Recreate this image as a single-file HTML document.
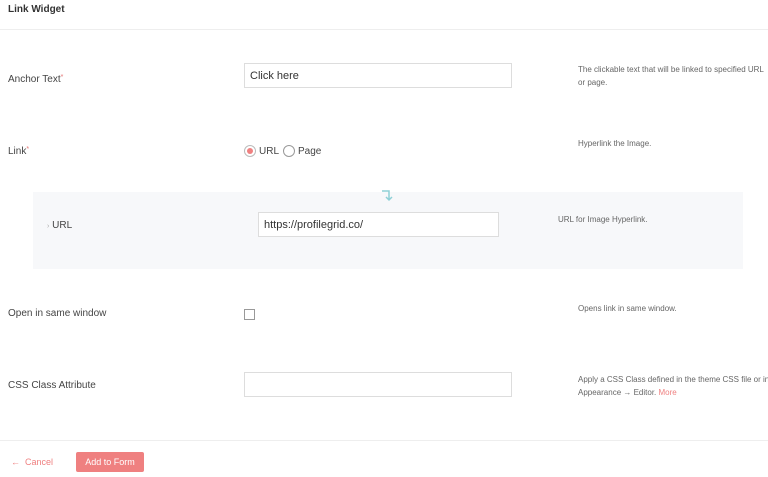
<!DOCTYPE html>
<html><head><style>
*{box-sizing:border-box;margin:0;padding:0}
body{width:768px;height:477px;background:#fff;font-family:"Liberation Sans",sans-serif;color:#444;position:relative;overflow:hidden}
.a{position:absolute;white-space:nowrap}
.lbl{font-size:10px;color:#444}
.help{font-size:8px;color:#666;line-height:13px}
.inp{position:absolute;border:1px solid #ddd;background:#fff;font-size:11px;color:#333;padding:6px 5px;height:25px}
.star{color:#e57373;font-size:7px;vertical-align:top}
</style></head><body>
<div class="a" style="left:8px;top:4px;font-size:10px;font-weight:bold;color:#333">Link Widget</div>
<div class="a" style="left:0;top:29px;width:768px;border-top:1px solid #eee"></div>

<div class="a lbl" style="left:8px;top:74px">Anchor Text<span class="star">*</span></div>
<div class="inp" style="left:244px;top:63px;width:268px">Click here</div>
<div class="a help" style="left:578px;top:63px">The clickable text that will be linked to specified URL<br>or page.</div>

<div class="a lbl" style="left:8px;top:146px">Link<span class="star">*</span></div>
<div class="a" style="left:244px;top:145px;width:12px;height:12px;border:1px solid #bbb;border-radius:50%;background:#fff"><div style="margin:2px;width:6px;height:6px;border-radius:50%;background:#ef8080"></div></div>
<div class="a lbl" style="left:259px;top:146px">URL</div>
<div class="a" style="left:283px;top:145px;width:12px;height:12px;border:1px solid #999;border-radius:50%"></div>
<div class="a lbl" style="left:298px;top:146px">Page</div>
<div class="a help" style="left:578px;top:137px">Hyperlink the Image.</div>

<div class="a" style="left:33px;top:192px;width:710px;height:77px;background:#f7f8fa"></div>
<svg class="a" style="left:381px;top:189px" width="14" height="14" viewBox="0 0 14 14"><path d="M1 2H8V11M5 8L8 11L11 8" stroke="#8fd0d6" stroke-width="1.5" fill="none"/></svg>
<div class="a lbl" style="left:47px;top:220px"><span style="color:#aaa;font-size:7px">›</span> URL</div>
<div class="inp" style="left:258px;top:212px;width:241px">https://profilegrid.co/</div>
<div class="a help" style="left:558px;top:213px">URL for Image Hyperlink.</div>

<div class="a lbl" style="left:8px;top:308px">Open in same window</div>
<div class="a" style="left:244px;top:309px;width:11px;height:11px;border:1px solid #999;background:#fff"></div>
<div class="a help" style="left:578px;top:302px">Opens link in same window.</div>

<div class="a lbl" style="left:8px;top:380px">CSS Class Attribute</div>
<div class="inp" style="left:244px;top:372px;width:268px"></div>
<div class="a help" style="left:578px;top:373px">Apply a CSS Class defined in the theme CSS file or in<br>Appearance → Editor. <span style="color:#ef8080">More</span></div>

<div class="a" style="left:0;top:440px;width:768px;border-top:1px solid #eee"></div>
<div class="a" style="left:11px;top:457px;font-size:9px;color:#ef8080">←&nbsp; Cancel</div>
<div class="a" style="left:76px;top:452px;width:68px;height:20px;background:#ef8080;border-radius:2px;color:#fff;font-size:9px;text-align:center;line-height:20px">Add to Form</div>
</body></html>
